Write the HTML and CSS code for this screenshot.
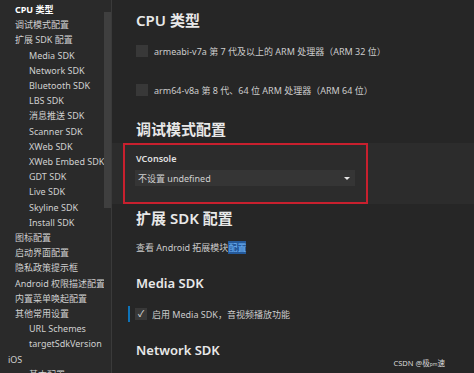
FILE: index.html
```html
<!DOCTYPE html>
<html lang="zh">
<head>
    <meta charset="UTF-8">
    <title>Settings</title>
    <link rel="stylesheet" href="styles.css">
</head>
<body>
    <!-- Tree of setting groups -->
    <div class="sidebar">
        <ul class="tree">
            <li class="lv1 active">CPU 类型</li>
            <li class="lv1">调试模式配置</li>
            <li class="lv1">扩展 SDK 配置</li>
            <li class="lv2">Media SDK</li>
            <li class="lv2">Network SDK</li>
            <li class="lv2">Bluetooth SDK</li>
            <li class="lv2">LBS SDK</li>
            <li class="lv2">消息推送 SDK</li>
            <li class="lv2">Scanner SDK</li>
            <li class="lv2">XWeb SDK</li>
            <li class="lv2">XWeb Embed SDK</li>
            <li class="lv2">GDT SDK</li>
            <li class="lv2">Live SDK</li>
            <li class="lv2">Skyline SDK</li>
            <li class="lv2">Install SDK</li>
            <li class="lv1">图标配置</li>
            <li class="lv1">启动界面配置</li>
            <li class="lv1">隐私政策提示框</li>
            <li class="lv1">Android 权限描述配置</li>
            <li class="lv1">内置菜单唤起配置</li>
            <li class="lv1">其他常用设置</li>
            <li class="lv2">URL Schemes</li>
            <li class="lv2">targetSdkVersion</li>
            <li class="lv0">iOS</li>
            <li class="lv2">基本配置</li>
        </ul>
        <div class="scroll-track">
            <div class="scroll-thumb"></div>
        </div>
    </div>

    <div class="main">
        <h2 class="title first">CPU 类型</h2>
        <div class="check-row row-a">
            <span class="box"></span>
            <span>armeabi-v7a 第 7 代及以上的 ARM 处理器（ARM 32 位）</span>
        </div>
        <div class="check-row row-b">
            <span class="box"></span>
            <span>arm64-v8a 第 8 代、64 位 ARM 处理器（ARM 64 位）</span>
        </div>

        <h2 class="title t-debug">调试模式配置</h2>
        <div class="setting focused">
            <div class="label">VConsole</div>
            <div class="select">
                <span>不设置 undefined</span>
                <span class="caret"></span>
            </div>
            <div class="mark"></div>
        </div>

        <h2 class="title t-ext">扩展 SDK 配置</h2>
        <p class="desc">查看 Android 拓展模块<span class="link">配置</span></p>

        <h3 class="sub t-media">Media SDK</h3>
        <div class="check-row modified">
            <span class="box checked">&#10003;</span>
            <span>启用 Media SDK，音视频播放功能</span>
        </div>

        <h3 class="sub t-net">Network SDK</h3>

        <div class="watermark">CSDN @极<small>pm</small>速</div>
    </div>
</body>
</html>
```

FILE: styles.css
```css
html, body {
    margin: 0;
    height: 100%;
}

body {
    font-family: "Noto Sans", "Noto Sans CJK SC", sans-serif;
    background-color: #262626;
    color: #cccccc;
    display: flex;
    overflow: hidden;
}

/* Left tree */
.sidebar {
    width: 111px;
    flex-shrink: 0;
    display: flex;
    background-color: #2a2a2a;
    border-right: 1px solid #3a3a3a;
}

.tree {
    list-style: none;
    margin: 0;
    padding: 2px 0 0 0;
    flex: 1;
    font-size: 9px;
    line-height: 15.2px;
    white-space: nowrap;
    overflow: hidden;
}

.tree li {
    color: #d0d0d0;
}

.tree .lv0 { padding-left: 8px; }
.tree .lv1 { padding-left: 15px; }
.tree .lv2 { padding-left: 29px; }

.tree .active {
    color: #ffffff;
    font-weight: 700;
}

.scroll-track {
    width: 7px;
    flex-shrink: 0;
}

.scroll-thumb {
    margin-top: 12px;
    height: 196px;
    background-color: #3f3f3f;
}

/* Main settings pane */
.main {
    flex: 1;
    position: relative;
    padding-left: 24px;
}

.title {
    margin: 0;
    font-size: 15px;
    line-height: 20px;
    font-weight: 600;
    color: #e8e8e8;
}

.first { margin-top: 10px; }
.t-debug { margin-top: 23px; }
.t-ext { margin-top: 4px; }

.sub {
    margin: 0;
    font-size: 13px;
    line-height: 16px;
    font-weight: 600;
    color: #e8e8e8;
}

.t-media { margin-top: 21px; }
.t-net { margin-top: 20px; }

.check-row {
    display: flex;
    align-items: center;
    height: 12px;
    font-size: 9px;
    white-space: nowrap;
}

.row-a { margin-top: 15px; }
.row-b { margin-top: 27px; }

.box {
    width: 12px;
    height: 12px;
    margin-right: 6px;
    background-color: #383838;
    flex-shrink: 0;
}

.box.checked {
    color: #e0e0e0;
    font-size: 9px;
    line-height: 12px;
    text-align: center;
}

.check-row.modified {
    margin-top: 15px;
    margin-left: -8px;
    height: 16px;
    border-left: 2px solid #0e73b8;
    padding-left: 5px;
}

.check-row.modified .box {
    margin-right: 5px;
}

.setting {
    position: relative;
    margin: 4px 0 0 -24px;
    padding: 10px 0 18px 24px;
}

.setting.focused {
    background-color: #2c2c2c;
}

.label {
    font-size: 9px;
    line-height: 12px;
    font-weight: 600;
    color: #e0e0e0;
}

.select {
    margin: 5px 0 0 -1px;
    width: 220px;
    height: 16px;
    box-sizing: border-box;
    padding: 0 5px 0 3px;
    background-color: #353535;
    font-size: 9px;
    display: flex;
    align-items: center;
    justify-content: space-between;
    color: #d0d0d0;
}

.caret {
    width: 0;
    height: 0;
    border-left: 3.5px solid transparent;
    border-right: 3.5px solid transparent;
    border-top: 3.5px solid #e8e8e8;
    margin-top: 1px;
}

/* red annotation frame drawn over the row */
.mark {
    position: absolute;
    left: 11px;
    top: 0;
    width: 245px;
    height: 61px;
    box-sizing: border-box;
    border: 2px solid #c8202e;
}

.desc {
    margin: 14px 0 0 0;
    font-size: 9px;
    line-height: 12px;
    color: #cccccc;
}

.link {
    background-color: #24599a;
    color: #6fb0f2;
}

.watermark {
    position: absolute;
    right: 29px;
    bottom: 5px;
    font-size: 7.5px;
    color: #d8d8d8;
}

.watermark small {
    font-size: 5px;
}
```
